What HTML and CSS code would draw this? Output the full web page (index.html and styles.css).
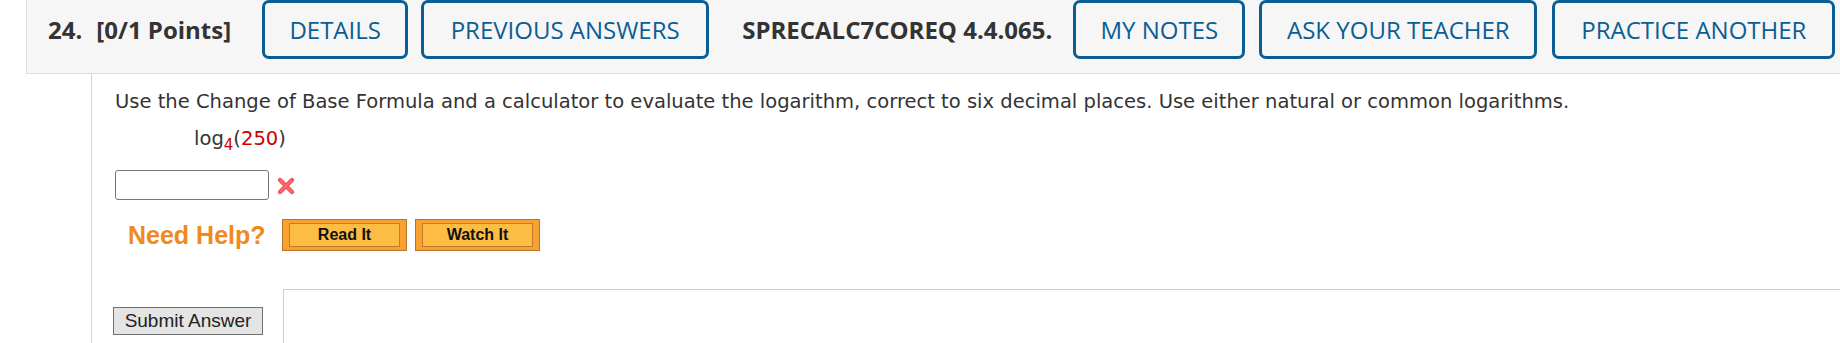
FILE: index.html
```html
<!DOCTYPE html>
<html>
<head>
<meta charset="utf-8">
<link rel="stylesheet" href="styles.css">
</head>
<body>
<div class="header">
  <span class="qnum">24.</span>
  <span class="points">[0/1 Points]</span>
  <button class="hbtn btn-details">DETAILS</button>
  <button class="hbtn btn-prev">PREVIOUS ANSWERS</button>
  <span class="qcode">SPRECALC7COREQ 4.4.065.</span>
  <button class="hbtn btn-notes">MY NOTES</button>
  <button class="hbtn btn-ask">ASK YOUR TEACHER</button>
  <button class="hbtn btn-practice">PRACTICE ANOTHER</button>
</div>
<div class="content">
  <p class="prompt">Use the Change of Base Formula and a calculator to evaluate the logarithm, correct to six decimal places. Use either natural or common logarithms.</p>
  <div class="expr">log<sub class="red">4</sub>(<span class="red">250</span>)</div>
  <div class="answer-row">
    <input class="answer" type="text">
    <svg class="wrong" width="20" height="20" viewBox="0 0 20 20">
      <path d="M4 4 L16 16 M16 4 L4 16" stroke="#f2525c" stroke-width="4.4" stroke-linecap="round" fill="none"/>
      <path d="M4 4 L16 16 M16 4 L4 16" stroke="#ff8a90" stroke-width="1.2" stroke-linecap="round" fill="none" opacity="0.6"/>
    </svg>
  </div>
  <div class="help-row">
    <span class="need-help">Need Help?</span>
    <button class="help-btn"><span class="help-inner">Read It</span></button>
    <button class="help-btn"><span class="help-inner">Watch It</span></button>
  </div>
  <div class="submit-row">
    <button class="submit">Submit Answer</button>
    <div class="side-box"></div>
  </div>
</div>
</body>
</html>
```
FILE: styles.css
```css
html, body {
  margin: 0;
  padding: 0;
  background: #fff;
  overflow: hidden;
}
body {
  width: 1840px;
  height: 343px;
}
.header {
  margin-left: 26px;
  height: 73px;
  background: #f6f6f6;
  border-left: 1px solid #dddddd;
  border-bottom: 1px solid #dddddd;
  display: flex;
  align-items: flex-start;
  font-family: "Open Sans", sans-serif;
  color: #333;
  white-space: nowrap;
}
.qnum, .points {
  font-weight: 700;
  font-size: 24px;
  line-height: 60px;
}
.qnum {
  margin-left: 21px;
}
.points {
  margin-left: 14px;
}
.hbtn {
  font-family: "Open Sans", sans-serif;
  font-size: 24px;
  color: #0b5e94;
  background: #f6f6f6;
  border: 3px solid #0b5e94;
  border-radius: 7px;
  height: 59px;
  margin-top: 0;
  padding: 0;
  text-align: center;
}
.btn-details { width: 146px; margin-left: 31px; }
.btn-prev { width: 288px; margin-left: 13px; }
.qcode {
  font-weight: 700;
  font-size: 24px;
  line-height: 60px;
  margin-left: 33px;
}
.btn-notes { width: 172px; margin-left: 21px; }
.btn-ask { width: 278px; margin-left: 14px; }
.btn-practice { width: 283px; margin-left: 15px; }

.content {
  margin-left: 91px;
  border-left: 1px solid #d4d4d4;
  padding-left: 23px;
  height: 269px;
  color: #333;
}
.prompt {
  margin: 0;
  padding-top: 16px;
  font-family: "DejaVu Sans", Verdana, sans-serif;
  font-size: 19.55px;
  line-height: 24px;
}
.expr {
  margin-top: 13px;
  margin-left: 79px;
  font-family: "DejaVu Sans", Verdana, sans-serif;
  font-size: 19.55px;
  line-height: 24px;
}
.expr sub {
  font-size: 15px;
  vertical-align: -5px;
  line-height: 0;
}
.red {
  color: #cc0000;
}
.answer-row {
  margin-top: 19px;
  display: flex;
  align-items: center;
  height: 30px;
}
.answer {
  width: 154px;
  height: 30px;
  box-sizing: border-box;
  border: 1px solid #767676;
  border-radius: 3px;
  padding: 0 4px;
  margin: 0;
}
.wrong {
  margin-left: 7px;
  margin-top: 2px;
}
.help-row {
  margin-top: 19px;
  display: flex;
  align-items: center;
  height: 32px;
}
.need-help {
  font-family: "Liberation Sans", Arial, sans-serif;
  font-weight: 700;
  font-size: 25px;
  color: #f0891e;
  margin-left: 13px;
  width: 154px;
}
.help-btn {
  width: 125px;
  height: 32px;
  box-sizing: border-box;
  border: 1px solid #b8742a;
  background: #f8a030;
  padding: 3px 6px;
  margin: 0 8px 0 0;
  display: flex;
  cursor: pointer;
}
.help-inner {
  flex: 1;
  display: block;
  border: 1px solid #c47b2c;
  background: #fdbd44;
  font-family: "Liberation Sans", Arial, sans-serif;
  font-weight: 700;
  font-size: 16px;
  line-height: 22px;
  color: #111;
  text-align: center;
}
.submit-row {
  margin-top: 38px;
  display: flex;
  align-items: flex-start;
}
.submit {
  margin-left: -2px;
  margin-top: 18px;
  width: 150px;
  height: 28px;
  padding: 0;
  border: 1px solid #707070;
  background: #e4e4e4;
  font-family: "Liberation Sans", Arial, sans-serif;
  font-size: 19px;
  color: #222;
  line-height: 26px;
}
.side-box {
  margin-left: 20px;
  flex: 1;
  height: 60px;
  border-top: 1px solid #cccccc;
  border-left: 1px solid #cccccc;
}
```
